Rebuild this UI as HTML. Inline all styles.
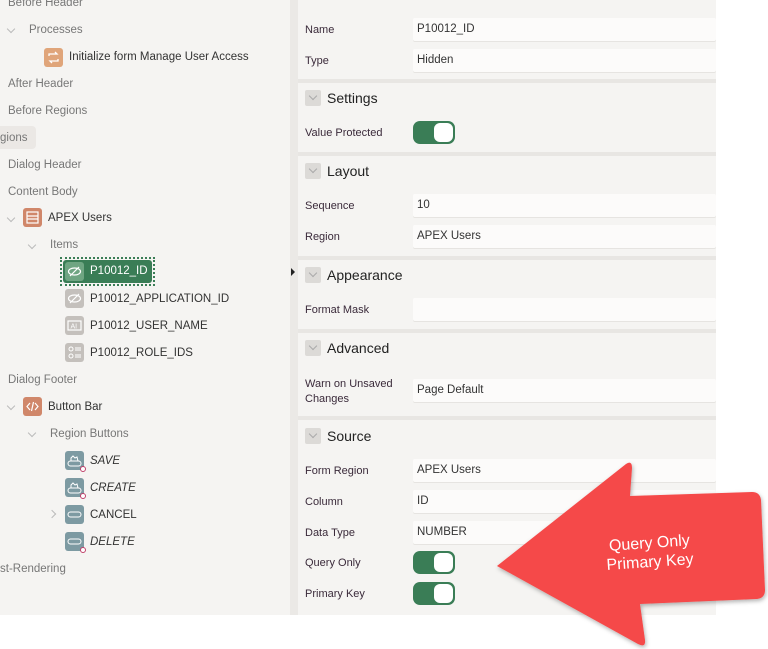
<!DOCTYPE html>
<html><head><meta charset="utf-8"><style>
*{margin:0;padding:0;box-sizing:border-box}
body{width:768px;height:649px;background:#fff;position:relative;overflow:hidden;font-family:"Liberation Sans",sans-serif;font-size:11.5px;color:#333}
.a{position:absolute;white-space:nowrap}
.left{position:absolute;left:0;top:0;width:290px;height:615px;background:#f5f4f2}
.div{position:absolute;left:290px;top:0;width:8px;height:615px;background:#ebe9e6}
.right{position:absolute;left:298px;top:0;width:418px;height:615px;background:#f5f4f2}
.sep{position:absolute;left:298px;width:418px;height:4px;background:#e8e6e3}
.g{color:#777}
.lbl{position:absolute;left:305px;color:#3a2a3a;font-size:11px}
.inp{position:absolute;left:413px;width:303px;height:23px;background:#fcfbfa;border-radius:2px;padding:5px 4px;font-size:11.5px;color:#333;box-shadow:0 1px 0 #e6e4e1}
.hd{position:absolute;left:305px;font-size:14px;color:#222}
.hd i{display:inline-block;width:16px;height:16px;background:#dcdad7;border-radius:2px;vertical-align:-3px;margin-right:6px;position:relative}
.hd i:after{content:"";position:absolute;left:5px;top:3px;width:5px;height:5px;border-right:1px solid #aaa;border-bottom:1px solid #aaa;transform:rotate(45deg)}
.tg{position:absolute;left:413px;width:42px;height:23px;background:#3a7d56;border-radius:7px}
.tg:after{content:"";position:absolute;right:2px;top:2px;width:19px;height:19px;background:#fff;border-radius:6px}
.ic{position:absolute;width:19px;height:19px;border-radius:3px}
.ic svg{position:absolute;left:0;top:0}
.chev{position:absolute;width:6px;height:6px;border-right:1px solid #bbb;border-bottom:1px solid #bbb;transform:rotate(45deg)}
.dot{position:absolute;width:6px;height:6px;border:1.5px solid #c0406a;border-radius:50%;background:#fff}
</style></head><body>
<div class="left"></div><div class="div"></div><div class="right"></div>

<div class="a g" style="left:8px;top:-3px">Before Header</div>
<div class="chev" style="left:8px;top:26px"></div>
<div class="a g" style="left:29px;top:24px">Processes</div>
<div class="ic" style="left:44px;top:48px;background:#e0a57a"><svg width="19" height="19"><path d="M5 8V6h8l-2-2M14 11v2H6l2 2" stroke="#fff" stroke-width="1.3" fill="none"/></svg></div>
<div class="a" style="left:69px;top:51px">Initialize form Manage User Access</div>
<div class="a g" style="left:8px;top:78px">After Header</div>
<div class="a g" style="left:8px;top:105px">Before Regions</div>
<div class="a" style="left:0;top:126px;width:36px;height:23px;background:#ebe8e5;border-radius:0 4px 4px 0"></div>
<div class="a g" style="left:0;top:132px">gions</div>
<div class="a g" style="left:8px;top:159px">Dialog Header</div>
<div class="a g" style="left:8px;top:186px">Content Body</div>
<div class="chev" style="left:8px;top:215px"></div>
<div class="ic" style="left:23px;top:208px;background:#d0876a"><svg width="19" height="19"><rect x="4" y="4" width="11" height="11" stroke="#fff" stroke-width="1.2" fill="none"/><path d="M4 8h11M4 11h11" stroke="#fff" stroke-width="1.2"/></svg></div>
<div class="a" style="left:48px;top:212px">APEX Users</div>
<div class="chev" style="left:29px;top:242px"></div>
<div class="a g" style="left:50px;top:239px">Items</div>
<div class="a" style="left:60px;top:257px;width:95px;height:29px;border:2px dotted #3a7d56"></div>
<div class="a" style="left:63px;top:260px;width:89px;height:23px;background:#3a7d56;border-radius:3px"></div>
<div class="ic" style="left:65px;top:262px;background:#6fa582"><svg width="19" height="19"><ellipse cx="9.5" cy="9.5" rx="6" ry="3.5" stroke="#fff" fill="none" stroke-width="1.2"/><path d="M5 14L14 5" stroke="#fff" stroke-width="1.2"/></svg></div>
<div class="a" style="left:90px;top:265px;color:#fff">P10012_ID</div>
<div class="ic" style="left:65px;top:289px;background:#c4c0bc"><svg width="19" height="19"><ellipse cx="9.5" cy="9.5" rx="6" ry="3.5" stroke="#fff" fill="none" stroke-width="1.2"/><path d="M5 14L14 5" stroke="#fff" stroke-width="1.2"/></svg></div>
<div class="a" style="left:90px;top:293px">P10012_APPLICATION_ID</div>
<div class="ic" style="left:65px;top:316px;background:#c4c0bc"><svg width="19" height="19"><rect x="3" y="5" width="13" height="9" stroke="#fff" fill="none" stroke-width="1.2"/><text x="5.5" y="12.5" font-size="7" fill="#fff" font-family="Liberation Sans">AI</text></svg></div>
<div class="a" style="left:90px;top:320px">P10012_USER_NAME</div>
<div class="ic" style="left:65px;top:343px;background:#c4c0bc"><svg width="19" height="19"><circle cx="6" cy="6" r="2" stroke="#fff" fill="none"/><circle cx="6" cy="13" r="2" stroke="#fff" fill="none"/><path d="M10 5h6M10 7h6M10 12h6M10 14h6" stroke="#fff"/></svg></div>
<div class="a" style="left:90px;top:347px">P10012_ROLE_IDS</div>
<div class="a g" style="left:8px;top:374px">Dialog Footer</div>
<div class="chev" style="left:8px;top:403px"></div>
<div class="ic" style="left:23px;top:397px;background:#d0876a"><svg width="19" height="19"><path d="M7 6L4 9.5 7 13M12 6l3 3.5-3 3.5M10.5 5l-2 9" stroke="#fff" fill="none" stroke-width="1.2"/></svg></div>
<div class="a" style="left:48px;top:401px">Button Bar</div>
<div class="chev" style="left:29px;top:430px"></div>
<div class="a g" style="left:50px;top:428px">Region Buttons</div>
<div class="ic" style="left:65px;top:451px;background:#7d9aa2"><svg width="19" height="19"><rect x="3" y="10" width="13" height="5" rx="2.5" stroke="#fff" fill="none"/><path d="M6 10V7l2-2 2 2 2-1 1 4" stroke="#fff" fill="none"/></svg></div><div class="dot" style="left:80px;top:466px"></div>
<div class="a" style="left:90px;top:455px;font-style:italic">SAVE</div>
<div class="ic" style="left:65px;top:478px;background:#7d9aa2"><svg width="19" height="19"><rect x="3" y="10" width="13" height="5" rx="2.5" stroke="#fff" fill="none"/><path d="M6 10V7l2-2 2 2 2-1 1 4" stroke="#fff" fill="none"/></svg></div><div class="dot" style="left:80px;top:493px"></div>
<div class="a" style="left:90px;top:482px;font-style:italic">CREATE</div>
<div class="chev" style="left:49px;top:511px;transform:rotate(-45deg)"></div>
<div class="ic" style="left:65px;top:505px;background:#7d9aa2"><svg width="19" height="19"><rect x="3" y="7" width="13" height="5" rx="2.5" stroke="#fff" fill="none"/></svg></div>
<div class="a" style="left:90px;top:509px">CANCEL</div>
<div class="ic" style="left:65px;top:532px;background:#7d9aa2"><svg width="19" height="19"><rect x="3" y="7" width="13" height="5" rx="2.5" stroke="#fff" fill="none"/></svg></div><div class="dot" style="left:80px;top:547px"></div>
<div class="a" style="left:90px;top:536px;font-style:italic">DELETE</div>
<div class="a g" style="left:0;top:563px">st-Rendering</div>
<div class="a" style="left:291px;top:268px;width:0;height:0;border-left:4px solid #222;border-top:4px solid transparent;border-bottom:4px solid transparent"></div>

<div class="lbl" style="top:24px">Name</div><div class="inp" style="top:18px">P10012_ID</div>
<div class="lbl" style="top:55px">Type</div><div class="inp" style="top:49px">Hidden</div>
<div class="sep" style="top:79px"></div>
<div class="hd" style="top:90px"><i></i>Settings</div>
<div class="lbl" style="top:127px">Value Protected</div><div class="tg" style="top:121px"></div>
<div class="sep" style="top:152px"></div>
<div class="hd" style="top:163px"><i></i>Layout</div>
<div class="lbl" style="top:200px">Sequence</div><div class="inp" style="top:194px">10</div>
<div class="lbl" style="top:231px">Region</div><div class="inp" style="top:225px">APEX Users</div>
<div class="sep" style="top:256px"></div>
<div class="hd" style="top:267px"><i></i>Appearance</div>
<div class="lbl" style="top:304px">Format Mask</div><div class="inp" style="top:298px"></div>
<div class="sep" style="top:329px"></div>
<div class="hd" style="top:340px"><i></i>Advanced</div>
<div class="lbl" style="top:377px;line-height:15px;white-space:normal">Warn on Unsaved<br>Changes</div><div class="inp" style="top:379px">Page Default</div>
<div class="sep" style="top:416px"></div>
<div class="hd" style="top:428px"><i></i>Source</div>
<div class="lbl" style="top:465px">Form Region</div><div class="inp" style="top:459px">APEX Users</div>
<div class="lbl" style="top:496px">Column</div><div class="inp" style="top:490px">ID</div>
<div class="lbl" style="top:527px">Data Type</div><div class="inp" style="top:521px">NUMBER</div>
<div class="lbl" style="top:557px">Query Only</div><div class="tg" style="top:551px"></div>
<div class="lbl" style="top:588px">Primary Key</div><div class="tg" style="top:582px"></div>

<svg class="a" style="left:0;top:0" width="768" height="649">
<defs><filter id="s"><feDropShadow dx="1" dy="2" stdDeviation="2" flood-opacity="0.3"/></filter></defs>
<path filter="url(#s)" fill="#f54848" d="M497,566 L626,464 Q632,460 632,468 L630,496 L752,492 Q760,492 761,500 L765,590 Q765,598 757,599 L640,604 L645,640 Q646,648 638,644 Z"/>
<text x="650" y="548" fill="#fff" font-family="Liberation Sans,sans-serif" font-size="16" text-anchor="middle" transform="rotate(-4 650 552)">Query Only</text>
<text x="650" y="567" fill="#fff" font-family="Liberation Sans,sans-serif" font-size="16" text-anchor="middle" transform="rotate(-4 650 562)">Primary Key</text>
</svg>
</body></html>
